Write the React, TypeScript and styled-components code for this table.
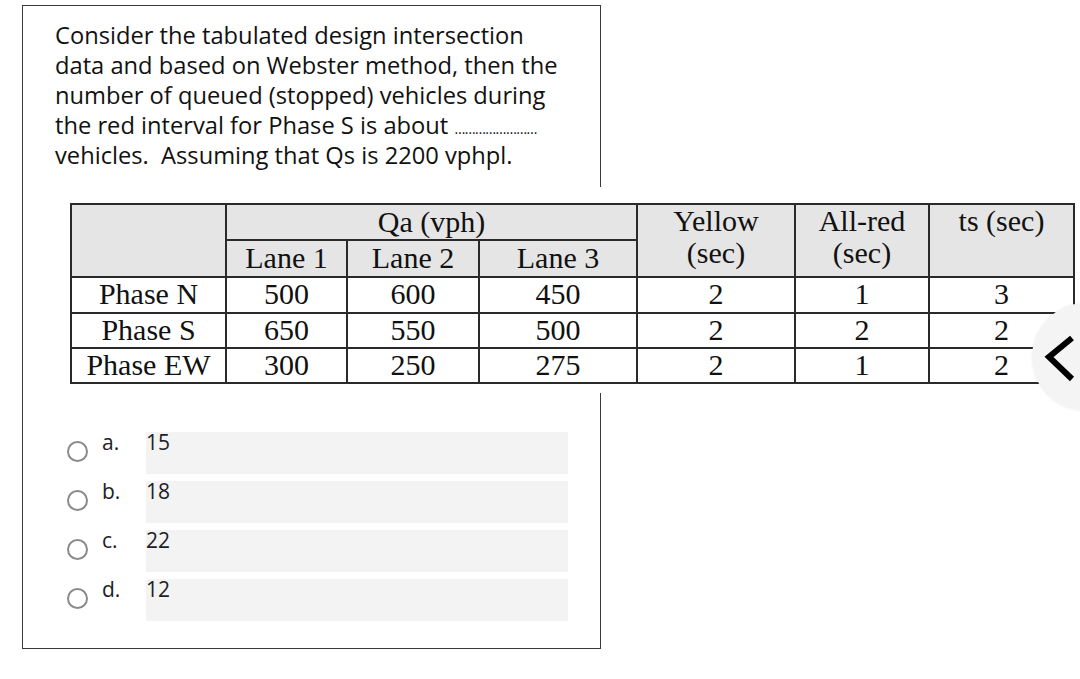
import React from 'react';
import styled, { createGlobalStyle } from 'styled-components';

const Global = createGlobalStyle`
  html, body { margin: 0; padding: 0; overflow: hidden; background: #fff; }
  body { font-family: "Open Sans", "Noto Sans", sans-serif; }
`;

const Page = styled.div`
  position: relative;
  width: 1080px;
  height: 679px;
  padding: 5px 0 0 22px;
  box-sizing: border-box;
`;

const Card = styled.div`
  box-sizing: border-box;
  width: 579px;
  height: 644px;
  border: 1px solid #3a3a3a;
  padding: 14px 0 0 32px;
`;

const Question = styled.p`
  margin: 0;
  font-size: 23.7px;
  line-height: 30px;
  color: #111;
  white-space: pre;
`;

const Dots = styled.span`
  font-size: 14px;
  line-height: 1;
  letter-spacing: -0.6px;
`;

const Figure = styled.div`
  margin: 17px 0 0 5px;
  width: 1018px;
  height: 206px;
  box-sizing: border-box;
  padding: 16px 0 0 10px;
  background: #fff;
`;

const Table = styled.table`
  border-collapse: collapse;
  table-layout: fixed;
  width: 1003px;
  font-family: "Liberation Serif", "Times New Roman", serif;
  font-size: 30px;
  color: #111;
`;

const Row = styled.tr<{ $h: number }>`
  height: ${(p) => p.$h}px;
`;

const Cell = styled.td`
  border: 2px solid #2a2a2a;
  padding: 0;
  text-align: center;
  vertical-align: top;
  line-height: 32px;
  font-weight: normal;
`;

const HeadCell = styled(Cell).attrs({ as: 'th' })<{ $tight?: boolean }>`
  background: #e5e5e5;
  line-height: ${(p) => (p.$tight ? '32px' : '34px')};
`;

const Options = styled.div`
  display: flex;
  flex-direction: column;
  gap: 7px;
  margin: 39px 0 0 12px;
`;

const OptionRow = styled.div`
  display: flex;
  align-items: flex-start;
  font-size: 21px;
  line-height: 21px;
  color: #1d2125;
`;

const Radio = styled.span`
  flex: none;
  width: 21px;
  height: 21px;
  box-sizing: border-box;
  border: 2.5px solid #8a8a8a;
  border-radius: 50%;
  margin-top: 9px;
`;

const Letter = styled.span`
  flex: none;
  width: 44px;
  margin-left: 14px;
`;

const Answer = styled.div`
  width: 422px;
  height: 42px;
  background: #f3f3f3;
`;

const NavButton = styled.div`
  position: absolute;
  left: 1032px;
  top: 303px;
  width: 108px;
  height: 108px;
  border-radius: 50%;
  background: #f4f4f4;
  box-shadow: 0 0 3px rgba(0, 0, 0, 0.06);
`;

const cols = [155, 121, 132, 158, 158, 134, 145];

const data = [
  ['Phase N', '500', '600', '450', '2', '1', '3'],
  ['Phase S', '650', '550', '500', '2', '2', '2'],
  ['Phase EW', '300', '250', '275', '2', '1', '2'],
];

const options = [
  ['a.', '15'],
  ['b.', '18'],
  ['c.', '22'],
  ['d.', '12'],
];

export default function App() {
  return (
    <Page>
      <Global />
      <Card>
        <Question>
          {'Consider the tabulated design intersection\n'}
          {'data and based on Webster method, then the\n'}
          {'number of queued (stopped) vehicles during\n'}
          {'the red interval for Phase S is about '}
          <Dots>{'…'.repeat(8)}</Dots>
          {'\nvehicles.  Assuming that Qs is 2200 vphpl.'}
        </Question>
        <Figure>
          <Table>
            <colgroup>
              {cols.map((w, i) => (
                <col key={i} style={{ width: w }} />
              ))}
            </colgroup>
            <thead>
              <Row $h={36}>
                <HeadCell rowSpan={2} />
                <HeadCell colSpan={3}>Qa (vph)</HeadCell>
                <HeadCell rowSpan={2} $tight>
                  Yellow
                  <br />
                  (sec)
                </HeadCell>
                <HeadCell rowSpan={2} $tight>
                  All-red
                  <br />
                  (sec)
                </HeadCell>
                <HeadCell rowSpan={2} $tight>
                  ts (sec)
                </HeadCell>
              </Row>
              <Row $h={37}>
                <HeadCell>Lane 1</HeadCell>
                <HeadCell>Lane 2</HeadCell>
                <HeadCell>Lane 3</HeadCell>
              </Row>
            </thead>
            <tbody>
              {data.map((r, i) => (
                <Row key={i} $h={i === 0 ? 36 : 35}>
                  {r.map((c, j) => (
                    <Cell key={j}>{c}</Cell>
                  ))}
                </Row>
              ))}
            </tbody>
          </Table>
        </Figure>
        <Options>
          {options.map(([l, v]) => (
            <OptionRow key={l}>
              <Radio />
              <Letter>{l}</Letter>
              <Answer>{v}</Answer>
            </OptionRow>
          ))}
        </Options>
      </Card>
      <NavButton>
        <svg width="108" height="108" viewBox="0 0 108 108">
          <polyline
            points="40,35 17,54 40,76"
            fill="none"
            stroke="#000"
            strokeWidth="6"
            strokeLinejoin="miter"
          />
        </svg>
      </NavButton>
    </Page>
  );
}
